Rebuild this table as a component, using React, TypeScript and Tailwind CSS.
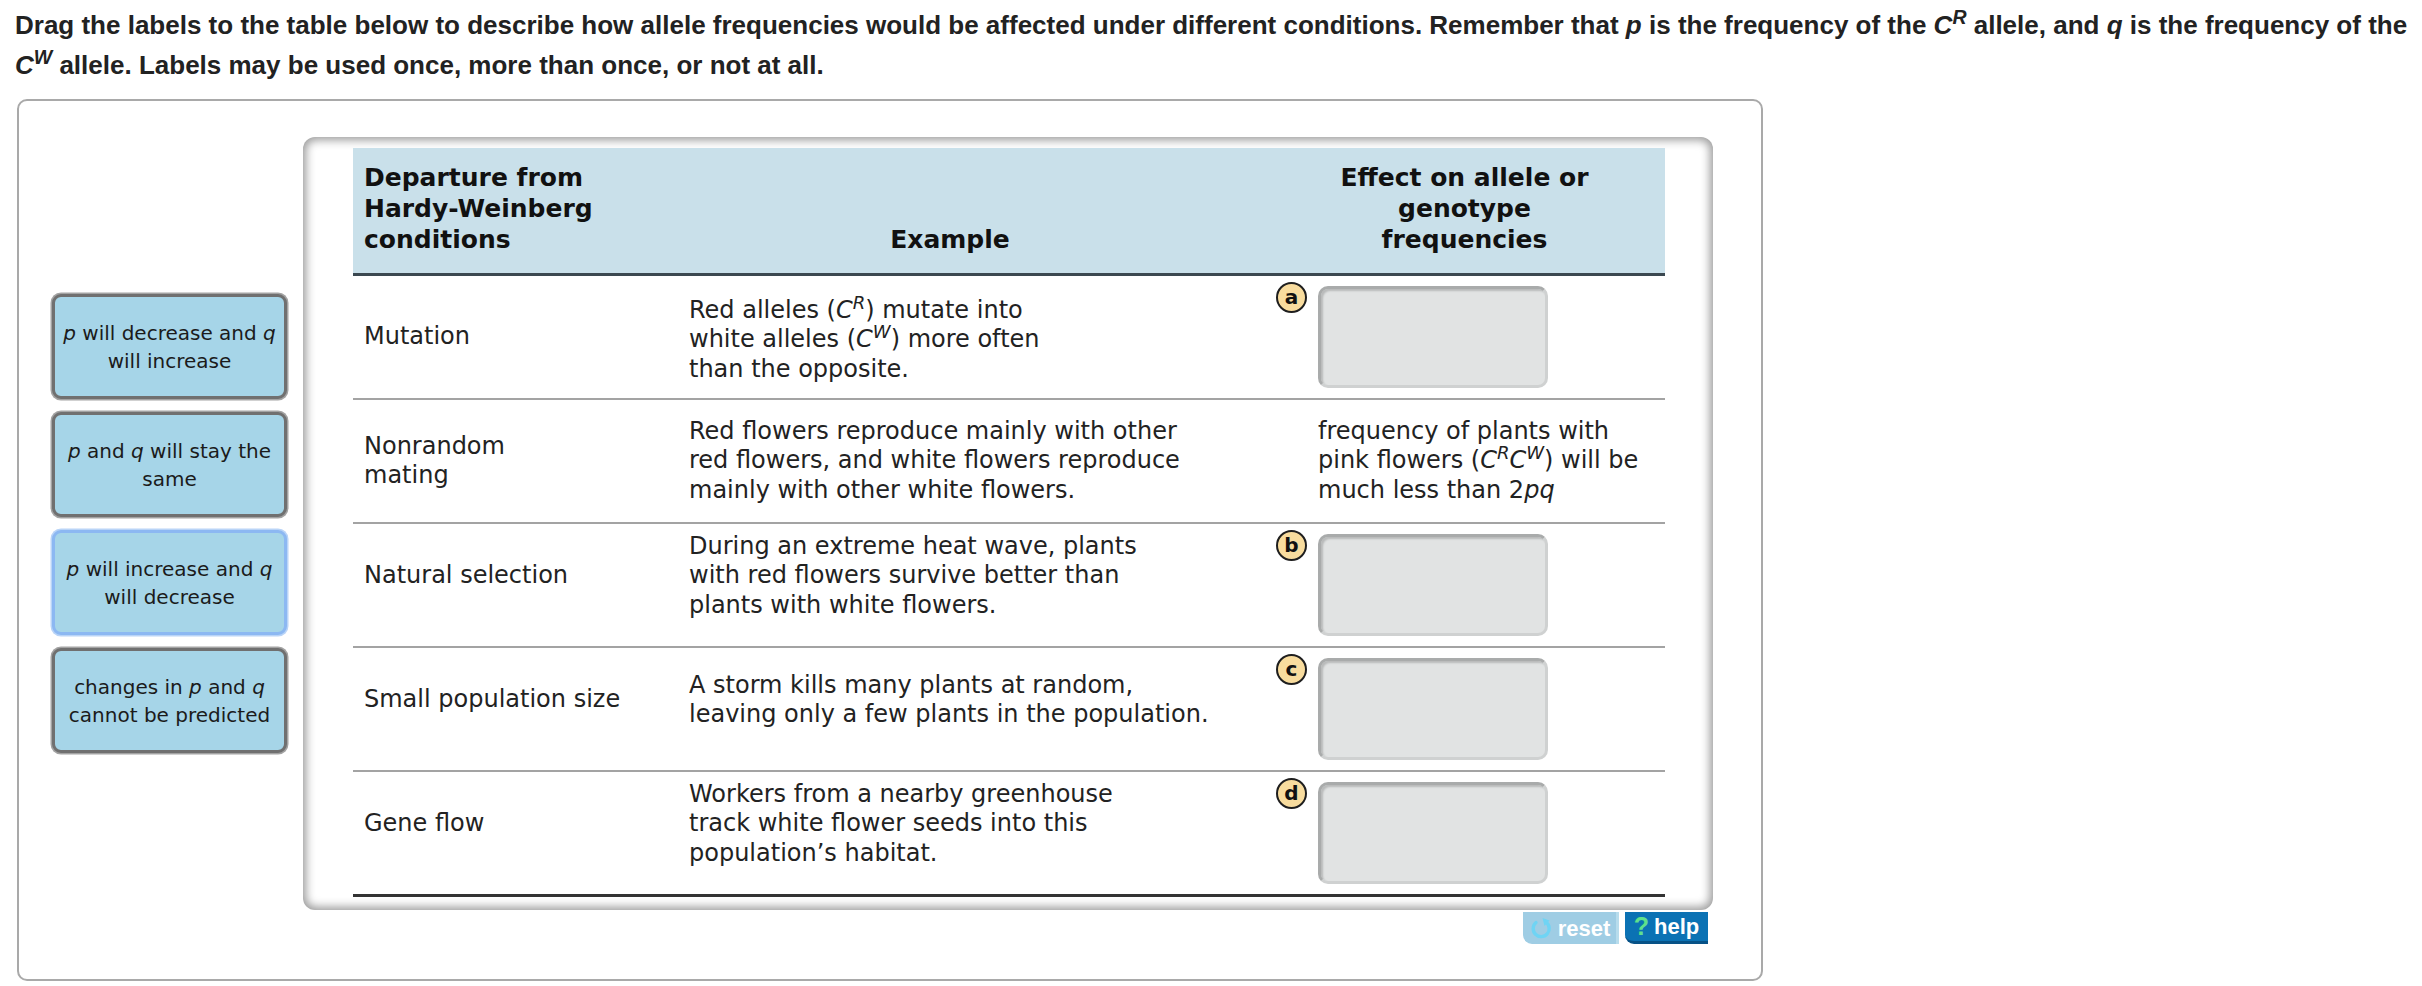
import React from "react";

const Sup = ({ base, sup }: { base: string; sup: string }) => (
  <>
    <span className="italic">{base}</span>
    <sup className="italic">{sup}</sup>
  </>
);

const LabelBox = ({ children, active }: { children: React.ReactNode; active?: boolean }) => (
  <div
    className={
      active
        ? "h-[105px] rounded-[9px] border-[3px] border-[#8cb8f2] shadow-[0_0_0_1.5px_#b9d4f7] bg-[#a6d5e8] flex items-center justify-center text-center px-[4px] text-[20px] leading-[28px] text-[#1b1b1b]"
        : "h-[105px] rounded-[9px] border-[3px] border-[#707070] shadow-[0_0_0_1.5px_#a3a3a3] bg-[#a6d5e8] flex items-center justify-center text-center px-[4px] text-[20px] leading-[28px] text-[#1b1b1b]"
    }
  >
    <div>{children}</div>
  </div>
);

const Badge = ({ letter }: { letter: string }) => (
  <div className="w-[31px] h-[31px] rounded-full bg-[#f8dc9e] border-[2.5px] border-[#1e1e1e] flex items-center justify-center text-[20px] leading-none font-bold text-[#111] shrink-0">
    <span className="-mt-[2px]">{letter}</span>
  </div>
);

const DropBox = () => (
  <div className="w-[230px] h-[102px] rounded-[10px] bg-[#e1e3e3] border-[3px] border-t-[#a9abab] border-l-[#a9abab] border-r-[#cfd1d1] border-b-[#cfd1d1] shadow-[inset_2px_2px_2px_rgba(0,0,0,0.18)]" />
);

const DropCell = ({ letter }: { letter: string }) => (
  <div className="flex items-start pl-[6px] gap-[11px]">
    <div className="-mt-[4px]">
      <Badge letter={letter} />
    </div>
    <DropBox />
  </div>
);

type Row = {
  name: React.ReactNode;
  example: React.ReactNode;
  effect: React.ReactNode;
  shift?: boolean;
  last?: boolean;
};

const rows: Row[] = [
  {
    name: "Mutation",
    example: (
      <div className="pt-[6px]">
        Red alleles (<Sup base="C" sup="R" />) mutate into
        <br />
        white alleles (<Sup base="C" sup="W" />) more often
        <br />
        than the opposite.
      </div>
    ),
    effect: <DropCell letter="a" />,
  },
  {
    name: (
      <>
        Nonrandom
        <br />
        mating
      </>
    ),
    example: (
      <>
        Red flowers reproduce mainly with other
        <br />
        red flowers, and white flowers reproduce
        <br />
        mainly with other white flowers.
      </>
    ),
    effect: (
      <div className="pl-[48px]">
        frequency of plants with
        <br />
        pink flowers (<Sup base="C" sup="R" />
        <Sup base="C" sup="W" />) will be
        <br />
        much less than 2<span className="italic">pq</span>
      </div>
    ),
  },
  {
    name: "Natural selection",
    example: (
      <>
        During an extreme heat wave, plants
        <br />
        with red flowers survive better than
        <br />
        plants with white flowers.
      </>
    ),
    effect: <DropCell letter="b" />,
    shift: true,
  },
  {
    name: "Small population size",
    example: (
      <>
        A storm kills many plants at random,
        <br />
        leaving only a few plants in the population.
      </>
    ),
    effect: <DropCell letter="c" />,
    shift: true,
  },
  {
    name: "Gene flow",
    example: (
      <>
        Workers from a nearby greenhouse
        <br />
        track white flower seeds into this
        <br />
        population’s habitat.
      </>
    ),
    effect: <DropCell letter="d" />,
    shift: true,
    last: true,
  },
];

const ResetIcon = () => (
  <svg width="24" height="24" viewBox="0 0 24 24" fill="none">
    <path d="M7 6.5 A8 8 0 1 0 17 6.2" stroke="#6fd4f4" strokeWidth="3.4" fill="none" strokeLinecap="round" />
    <path d="M13.5 2 L20.5 4.5 L15.5 10 Z" fill="#6fd4f4" />
  </svg>
);

export default function App() {
  return (
    <div className="w-[2422px] h-[986px] bg-white overflow-hidden font-['Liberation_Sans',Arial,sans-serif]">
      <p className="pl-[15px] pt-[5px] text-[26px] leading-[40px] font-bold text-[#222] whitespace-nowrap">
        Drag the labels to the table below to describe how allele frequencies would be affected under different
        conditions. Remember that <span className="italic">p</span> is the frequency of the{" "}
        <Sup base="C" sup="R" /> allele, and <span className="italic">q</span> is the frequency of the
        <br />
        <Sup base="C" sup="W" /> allele. Labels may be used once, more than once, or not at all.
      </p>

      <div className="ml-[17px] mt-[14px] w-[1746px] h-[882px] border-2 border-[#a9a9a9] rounded-[10px] flex">
        {/* label column */}
        <div className="ml-[33px] pt-[193px] w-[235px] flex flex-col gap-[13px] font-['DejaVu_Sans',Verdana,sans-serif]">
          <LabelBox>
            <span className="italic">p</span> will decrease and <span className="italic">q</span>
            <br />
            will increase
          </LabelBox>
          <LabelBox>
            <span className="italic">p</span> and <span className="italic">q</span> will stay the
            <br />
            same
          </LabelBox>
          <LabelBox active>
            <span className="italic">p</span> will increase and <span className="italic">q</span>
            <br />
            will decrease
          </LabelBox>
          <LabelBox>
            changes in <span className="italic">p</span> and <span className="italic">q</span>
            <br />
            cannot be predicted
          </LabelBox>
        </div>

        {/* table panel + buttons */}
        <div className="ml-[16px] flex flex-col">
          <div className="mt-[36px] w-[1410px] h-[773px] rounded-[12px] bg-white shadow-[inset_0_0_10px_3px_rgba(0,0,0,0.4)] pl-[50px] pt-[11px] font-['DejaVu_Sans',Verdana,sans-serif] text-[#222]">
            <div className="w-[1312px]">
              {/* header */}
              <div className="h-[128px] bg-[#c9e0ea] border-b-[3px] border-[#3b4850] flex items-end pb-[18px] text-[25px] leading-[31px] font-bold text-[#111]">
                <div className="w-[325px] pl-[11px]">
                  Departure from
                  <br />
                  Hardy-Weinberg
                  <br />
                  conditions
                </div>
                <div className="w-[592px] pl-[11px] pr-[59px] text-center">Example</div>
                <div className="w-[395px] pr-[6px] text-center">
                  Effect on allele or
                  <br />
                  genotype
                  <br />
                  frequencies
                </div>
              </div>
              {/* rows */}
              {rows.map((r, i) => (
                <div
                  key={i}
                  className={
                    r.last
                      ? "h-[125px] border-b-[3px] border-[#333] flex items-center text-[24px] leading-[29.5px]"
                      : "h-[124px] border-b-2 border-[#a3a3a3] flex items-center text-[24px] leading-[29.5px]"
                  }
                >
                  <div className={r.shift ? "w-[325px] pl-[11px] pb-[18px]" : "w-[325px] pl-[11px]"}>{r.name}</div>
                  <div className={r.shift ? "w-[592px] pl-[11px] pb-[18px]" : "w-[592px] pl-[11px]"}>{r.example}</div>
                  <div className="w-[395px]">{r.effect}</div>
                </div>
              ))}
            </div>
          </div>
          <div className="mt-[2px] flex justify-end pr-[5px] gap-[6px] font-['Liberation_Sans',Arial,sans-serif] font-bold text-[22px] text-white">
            <div className="h-[32px] w-[96px] rounded-bl-[9px] bg-[#9fcde4] border-r-[3px] border-[#b7dcec] flex items-center justify-center gap-[5px]">
              <ResetIcon />
              <span>reset</span>
            </div>
            <div className="h-[32px] w-[83px] rounded-bl-[9px] bg-[#0b72b4] border-b-[3px] border-[#075287] flex items-center justify-center gap-[5px]">
              <span className="text-[#5fe08c] text-[25px]">?</span>
              <span>help</span>
            </div>
          </div>
        </div>
      </div>
    </div>
  );
}
